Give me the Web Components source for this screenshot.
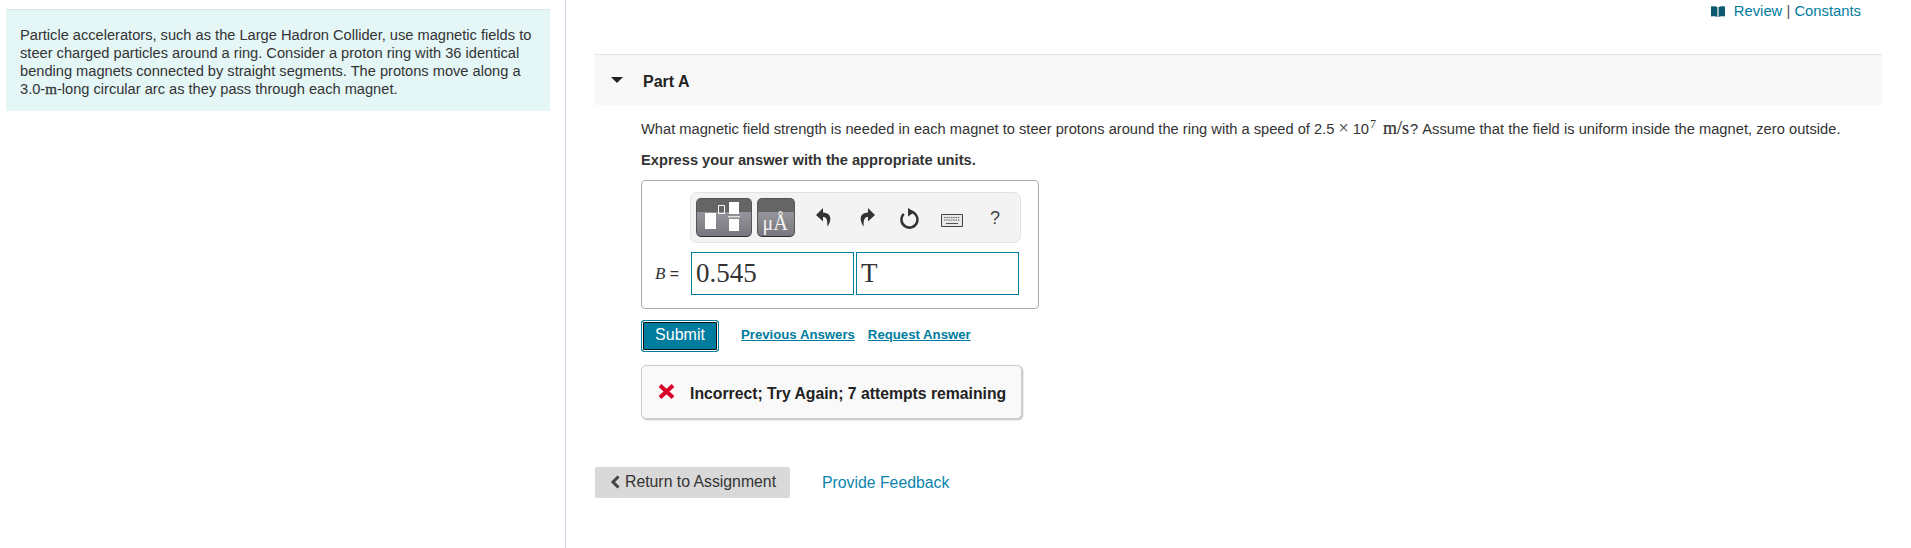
<!DOCTYPE html>
<html lang="en">
<head>
<meta charset="utf-8">
<title>Part A</title>
<style>
  html, body { margin: 0; height: 548px; overflow: hidden; background: #fff; }
  body { font: 14.67px/18px "Liberation Sans", Arial, sans-serif; color: #333; }
</style>
</head>
<body>
<mp-page>
  <mp-intro slot="side">Particle accelerators, such as the Large Hadron Collider, use magnetic fields to steer charged particles around a ring. Consider a proton ring with 36 identical bending magnets connected by straight segments. The protons move along a <span style="white-space:nowrap">3.0-<b style="font-family:'Liberation Serif',serif;font-size:15px;font-weight:400;-webkit-text-stroke:.3px">m</b>-long</span> circular arc as they pass through each magnet.</mp-intro>
  <mp-part title="Part A">
    <p style="margin:0;white-space:nowrap;line-height:18px">What magnetic field strength is needed in each magnet to steer protons around the ring with a speed of 2.5 <span style="font-family:'Liberation Serif',serif;font-size:18px">×</span> 10<sup style="font:12px/0 'Liberation Serif',serif;vertical-align:6px;margin-left:1px">7</sup> <span style="font-family:'Liberation Serif',serif;font-size:18px;margin:0 1px 0 3px;-webkit-text-stroke:.2px">m/s</span>? <span style="letter-spacing:.03px">Assume that the field is uniform inside the magnet, zero outside.</span></p>
    <p style="margin:13px 0 0;font-weight:700;line-height:18px">Express your answer with the appropriate units.</p>
    <mp-answer-box label="B" value="0.545" unit="T"></mp-answer-box>
    <mp-actions></mp-actions>
    <mp-feedback>Incorrect; Try Again; 7 attempts remaining</mp-feedback>
  </mp-part>
  <mp-footer></mp-footer>
</mp-page>

<script>
const TEAL = "#007c9e";

class MpPage extends HTMLElement {
  constructor() {
    super();
    this.attachShadow({ mode: "open" }).innerHTML = `
      <style>
        :host { display: grid; grid-template-columns: 566px 1fr; height: 548px; box-sizing: border-box; }
        aside { border-right: 1px solid #c8d3e1; padding: 9px 15px 0 6px; }
        main { padding: 0 29px; min-width: 0; }
        .top { height: 54px; display: flex; justify-content: flex-end; gap: 9px; padding: 2px 21px 0 0; box-sizing: border-box; color: ${TEAL}; font-size: 14.8px; line-height: 18px; }
        .top svg { margin-top: 4px; }
        .top .sep { color: #555; }
      </style>
      <aside><slot name="side"></slot></aside>
      <main>
        <div class="top">
          <svg width="14" height="11" viewBox="0 0 14 11"><path fill="#0b5a70" d="M0 .5C2 0 5 0 6.400 1v10C5 10 2 10 0 10.500zM14 .5C12 0 9 0 7.600 1v10c1.400-1 4.400-1 6.400-.5z"/></svg>
          <span>Review <span class="sep">|</span> Constants</span>
        </div>
        <slot></slot>
      </main>`;
  }
}

class MpIntro extends HTMLElement {
  constructor() {
    super();
    this.attachShadow({ mode: "open" }).innerHTML = `
      <style>
        :host { display: block; box-sizing: border-box; height: 102px; background: #e5f6f7; border-top: 1px solid #dfe4e5; padding: 16px 14px 0; font-size: 14.63px; line-height: 18px; color: #333; }
      </style>
      <slot></slot>`;
  }
}

class MpPart extends HTMLElement {
  constructor() {
    super();
    this.attachShadow({ mode: "open" }).innerHTML = `
      <style>
        :host { display: block; }
        header { height: 50px; border-top: 1px solid #e3e3e3; background: #f8f8f8; display: flex; align-items: center; padding-left: 16px; gap: 20px; font-weight: 700; font-size: 16px; color: #222; }
        .tri { width: 0; height: 0; border: 6.500px solid transparent; border-top: 6.500px solid #222; border-bottom: 0; }
        .t { padding-top: 3px; }
        .body { padding: 14px 0 0 46px; }
      </style>
      <header><span class="tri"></span><span class="t" id="t"></span></header>
      <div class="body"><slot></slot></div>`;
  }
  connectedCallback() {
    this.shadowRoot.querySelector("#t").textContent = this.getAttribute("title");
  }
}

class MpToolbar extends HTMLElement {
  constructor() {
    super();
    this.attachShadow({ mode: "open" }).innerHTML = `
      <style>
        :host { display: flex; align-items: center; box-sizing: border-box; width: 331px; height: 51px; background: #f3f3f3; border: 1px solid #e2e2e2; border-radius: 7px; padding-left: 5px; color: #333; }
        .btn { box-sizing: border-box; height: 39px; border-radius: 5px; border: 1px solid #555; border-bottom-color: #2c2c2c; background: linear-gradient(#656565 0 13.500px, #94949a 13.500px, #77777d 100%); display: block; }
        .tpl { width: 56px; margin-right: 5px; }
        .tpl svg { display: block; margin: -1px; }
        .unit { width: 38px; display: flex; justify-content: center; align-items: baseline; font-family: "Liberation Serif", serif; color: #f4f4f4; line-height: 38px; padding-top: 4px; }
        .unit .m { font-size: 20px; }
        .unit .a { font-size: 24px; display: inline-block; transform: scaleX(.85); margin-left: -1px; }
        .icons { display: flex; align-items: center; }
        .icons svg { display: block; }
        .q { font: 18px/1 "Liberation Sans", sans-serif; color: #444; }
      </style>
      <div class="btn tpl">
        <svg width="56" height="39" viewBox="0 0 56 39">
          <path fill="#fff" d="M9 15h11v16H9z"/>
          <path fill="none" stroke="#fff" d="M22.500 7.500h6v8h-6z"/>
          <path fill="#fff" d="M33 4h10v12H33zM33 21h10v12H33z"/>
          <path fill="#ddd" d="M32 18h12v1.500H32z"/>
        </svg>
      </div>
      <div class="btn unit"><span class="m">μ</span><span class="a">Å</span></div>
      <div class="icons">
        <svg style="margin-left:21px" width="16" height="19" viewBox="0 0 16 19"><path fill="#333" d="M7 0 0 7l7 6.500V9c3 0 4.800 2 4.300 9.500C15 14.500 17 5 7 4.500z"/></svg>
        <svg style="margin-left:27px" width="16" height="19" viewBox="0 0 16 19"><path fill="#333" d="m9 0 7 7-7 6.500V9c-3 0-4.800 2-4.300 9.500C1 14.500-1 5 9 4.500z"/></svg>
        <svg style="margin-left:25px;margin-top:1px" width="20" height="21" viewBox="0 0 20 21"><path fill="none" stroke="#333" stroke-width="2.500" d="M10 3.600a8 8 0 1 1-6.200 2.300"/><path fill="#333" d="M8 0v8.500L14.500 4z"/></svg>
        <svg style="margin-left:21px;margin-top:5px" width="22" height="13" viewBox="0 0 22 13"><path fill="#e8e8e8" stroke="#444" d="M.5.500h21v12H.5z"/><path stroke="#666" stroke-dasharray="1.500 .8" d="M3 3.500h16M3 6h16"/><path stroke="#555" d="M5 9.500h12"/></svg>
        <span class="q" style="margin-left:27px">?</span>
      </div>`;
  }
}

class MpAnswerBox extends HTMLElement {
  constructor() {
    super();
    this.attachShadow({ mode: "open" }).innerHTML = `
      <style>
        :host { display: block; box-sizing: border-box; width: 398px; height: 129px; margin-top: 11px; border: 1px solid #aaa; border-radius: 4px; padding: 11px 0 0 48px; }
        .row { display: flex; align-items: center; margin: 9px 0 0 -36px; }
        .lab { width: 37px; font: 16px "Liberation Sans", sans-serif; white-space: nowrap; }
        .lab i { font: italic 17px "Liberation Serif", serif; margin-left: 1px; }
        .inp { box-sizing: border-box; width: 163px; height: 43px; border: 1px solid ${TEAL}; font: 27px/41px "Liberation Serif", serif; padding-left: 4px; color: #333; }
        .inp + .inp { margin-left: 2px; }
      </style>
      <mp-toolbar></mp-toolbar>
      <div class="row">
        <span class="lab"><i id="l"></i> =</span>
        <span class="inp" id="v"></span><span class="inp" id="u"></span>
      </div>`;
  }
  connectedCallback() {
    const root = this.shadowRoot;
    root.querySelector("#l").textContent = this.getAttribute("label");
    root.querySelector("#v").textContent = this.getAttribute("value");
    root.querySelector("#u").textContent = this.getAttribute("unit");
  }
}

class MpActions extends HTMLElement {
  constructor() {
    super();
    this.attachShadow({ mode: "open" }).innerHTML = `
      <style>
        :host { display: flex; align-items: center; margin-top: 11px; height: 32px; }
        .submit { box-sizing: border-box; width: 78px; height: 32px; background: ${TEAL}; border: 1px solid ${TEAL}; box-shadow: inset 0 0 0 1px #fff, inset 0 0 0 2px #111; border-radius: 3px; color: #fff; font: 16px/28px "Liberation Sans", sans-serif; text-align: center; margin-right: 22px; }
        a { color: ${TEAL}; font: 700 13.200px "Liberation Sans", sans-serif; text-decoration: underline; margin: -4px 13px 0 0; }
      </style>
      <div class="submit">Submit</div>
      <a>Previous Answers</a><a>Request Answer</a>`;
  }
}

class MpFeedback extends HTMLElement {
  constructor() {
    super();
    this.attachShadow({ mode: "open" }).innerHTML = `
      <style>
        :host { display: flex; align-items: center; box-sizing: border-box; width: 381px; height: 54px; margin-top: 13px; background: #f9f9f9; border: 1px solid #ccc; border-radius: 5px; box-shadow: 1px 1px 2px #bbb; padding-left: 16px; gap: 15px; font: 700 15.750px "Liberation Sans", sans-serif; color: #222; }
        svg { margin-top: -2px; }
        span { padding-top: 3px; }
      </style>
      <svg width="17" height="15" viewBox="0 0 17 15"><path fill="none" stroke="#d9002b" stroke-width="4" d="m2 1.500 13 12M15 1.500 2 13.500"/></svg>
      <span><slot></slot></span>`;
  }
}

class MpFooter extends HTMLElement {
  constructor() {
    super();
    this.attachShadow({ mode: "open" }).innerHTML = `
      <style>
        :host { display: flex; align-items: center; margin-top: 48px; height: 31px; }
        .back { box-sizing: border-box; width: 195px; height: 31px; background: #d9d9d9; border-radius: 2px; display: flex; align-items: center; gap: 5px; padding: 0 0 1px 15px; color: #333; font: 15.800px "Liberation Sans", sans-serif; }
        a { color: #0a85ad; font: 15.800px "Liberation Sans", sans-serif; margin-left: 32px; }
      </style>
      <div class="back">
        <svg width="10" height="14" viewBox="0 0 10 14"><path fill="none" stroke="#444" stroke-width="3" d="M8.500 1.500 3 7l5.500 5.500"/></svg>
        <span>Return to Assignment</span>
      </div>
      <a>Provide Feedback</a>`;
  }
}

customElements.define("mp-page", MpPage);
customElements.define("mp-intro", MpIntro);
customElements.define("mp-part", MpPart);
customElements.define("mp-toolbar", MpToolbar);
customElements.define("mp-answer-box", MpAnswerBox);
customElements.define("mp-actions", MpActions);
customElements.define("mp-feedback", MpFeedback);
customElements.define("mp-footer", MpFooter);
</script>
</body>
</html>
